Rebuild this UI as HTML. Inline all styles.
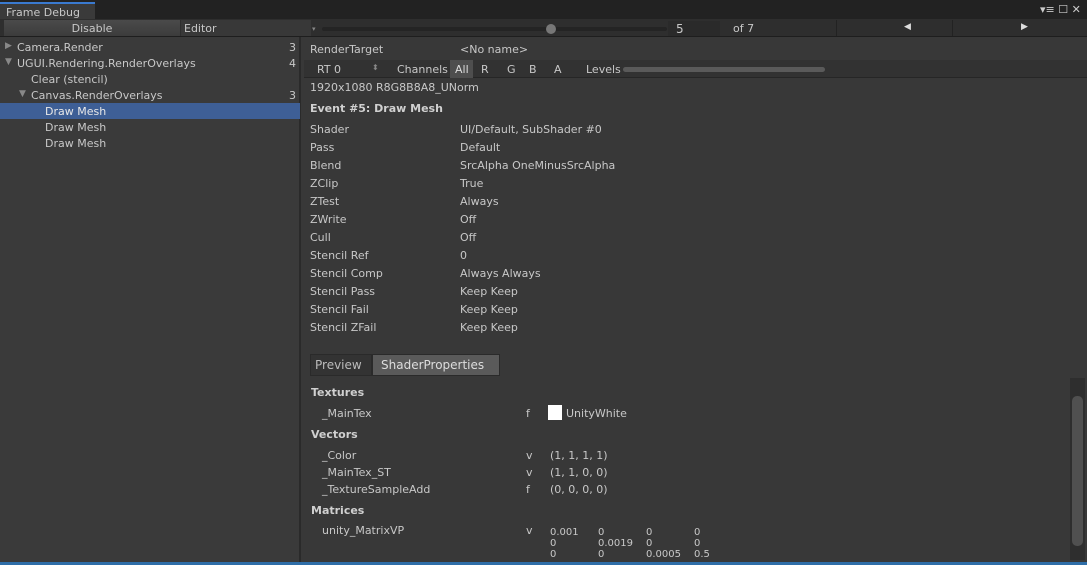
<!DOCTYPE html>
<html><head><style>
*{margin:0;padding:0;box-sizing:border-box}
body{width:1087px;height:565px;overflow:hidden;background:#383838;font-family:"DejaVu Sans","Liberation Sans",sans-serif;font-size:11px;color:#c8c8c8;position:relative}
.a{position:absolute;white-space:nowrap}
.b{font-weight:bold;color:#d0d0d0}
</style></head><body>
<div class="a" style="left:0;top:0;width:1087px;height:19px;background:#222"></div>
<div class="a" style="left:0;top:2px;width:95px;height:2px;background:#3a7ad0"></div>
<div class="a" style="left:0;top:4px;width:95px;height:16px;background:#3a3a3a;padding:2px 0 0 6px">Frame Debug</div>
<div class="a" style="left:1040px;top:3px;color:#ccc;font-size:11px">▾≡ ☐ ✕</div>
<div class="a" style="left:0;top:19px;width:1087px;height:18px;background:#2e2e2e;border-bottom:1px solid #1e1e1e"></div>
<div class="a" style="left:4px;top:20px;width:176px;height:16px;background:linear-gradient(#4a4a4a,#3c3c3c);text-align:center;padding-top:2px">Disable</div>
<div class="a" style="left:181px;top:20px;width:130px;height:16px;background:#383838;padding:2px 0 0 3px">Editor</div>
<div class="a" style="left:312px;top:25px;font-size:7px;color:#888">▾</div>
<div class="a" style="left:322px;top:27px;width:345px;height:4px;background:#242424;border-radius:2px"></div>
<div class="a" style="left:546px;top:24px;width:10px;height:10px;border-radius:5px;background:#777"></div>
<div class="a" style="left:668px;top:21px;width:52px;height:15px;background:#2a2a2a;padding:1px 0 0 8px;font-size:12px">5</div>
<div class="a" style="left:733px;top:22px">of 7</div>
<div class="a" style="left:836px;top:20px;width:1px;height:16px;background:#222"></div>
<div class="a" style="left:952px;top:20px;width:1px;height:16px;background:#222"></div>
<div class="a" style="left:904px;top:22px;font-size:9px;color:#ddd">◀</div>
<div class="a" style="left:1021px;top:22px;font-size:9px;color:#ddd">▶</div>
<div class="a" style="left:0;top:37px;width:301px;height:525px;background:#3a3a3a;border-right:2px solid #2a2a2a"></div>
<div class="a" style="left:5px;top:41px;color:#888;font-size:9px">▶</div>
<div class="a" style="left:17px;top:41px">Camera.Render</div><div class="a" style="left:289px;top:41px">3</div>
<div class="a" style="left:5px;top:57px;color:#888;font-size:9px">▼</div>
<div class="a" style="left:17px;top:57px">UGUI.Rendering.RenderOverlays</div><div class="a" style="left:289px;top:57px">4</div>
<div class="a" style="left:31px;top:73px">Clear (stencil)</div>
<div class="a" style="left:19px;top:89px;color:#888;font-size:9px">▼</div>
<div class="a" style="left:31px;top:89px">Canvas.RenderOverlays</div><div class="a" style="left:289px;top:89px">3</div>
<div class="a" style="left:0;top:103px;width:300px;height:16px;background:#3e5f96"></div>
<div class="a" style="left:45px;top:105px;color:#e8e8e8">Draw Mesh</div>
<div class="a" style="left:45px;top:121px">Draw Mesh</div>
<div class="a" style="left:45px;top:137px">Draw Mesh</div>
<div class="a" style="left:310px;top:43px">RenderTarget</div>
<div class="a" style="left:460px;top:43px">&lt;No name&gt;</div>
<div class="a" style="left:304px;top:60px;width:783px;height:18px;background:#323232;border-bottom:1px solid #262626"></div>
<div class="a" style="left:317px;top:63px">RT 0</div><div class="a" style="left:372px;top:63px;color:#888;font-size:8px">⬍</div>
<div class="a" style="left:397px;top:63px">Channels</div>
<div class="a" style="left:450px;top:60px;width:23px;height:18px;background:#4e4e4e"></div>
<div class="a" style="left:455px;top:63px;color:#ddd">All</div>
<div class="a" style="left:481px;top:63px">R</div><div class="a" style="left:507px;top:63px">G</div><div class="a" style="left:529px;top:63px">B</div><div class="a" style="left:554px;top:63px">A</div>
<div class="a" style="left:586px;top:63px">Levels</div>
<div class="a" style="left:623px;top:67px;width:202px;height:5px;background:#5a5a5a;border-radius:3px"></div>
<div class="a" style="left:310px;top:81px">1920x1080 R8G8B8A8_UNorm</div>
<div class="a b" style="left:310px;top:102px">Event #5: Draw Mesh</div>
<div class="a" style="left:310px;top:121px;line-height:18px">Shader<br>Pass<br>Blend<br>ZClip<br>ZTest<br>ZWrite<br>Cull<br>Stencil Ref<br>Stencil Comp<br>Stencil Pass<br>Stencil Fail<br>Stencil ZFail</div>
<div class="a" style="left:460px;top:121px;line-height:18px">UI/Default, SubShader #0<br>Default<br>SrcAlpha OneMinusSrcAlpha<br>True<br>Always<br>Off<br>Off<br>0<br>Always Always<br>Keep Keep<br>Keep Keep<br>Keep Keep</div>
<div class="a" style="left:310px;top:354px;width:62px;height:22px;background:#333;border:1px solid #2a2a2a;padding:3px 0 0 4px;font-size:12px;color:#bbb">Preview</div>
<div class="a" style="left:372px;top:354px;width:128px;height:22px;background:#5a5a5a;border:1px solid #2a2a2a;padding:3px 0 0 8px;font-size:12px;color:#ddd">ShaderProperties</div>
<div class="a b" style="left:311px;top:386px">Textures</div>
<div class="a" style="left:322px;top:407px">_MainTex</div><div class="a" style="left:526px;top:407px">f</div>
<div class="a" style="left:548px;top:405px;width:14px;height:15px;background:#fff"></div>
<div class="a" style="left:566px;top:407px">UnityWhite</div>
<div class="a b" style="left:311px;top:428px">Vectors</div>
<div class="a" style="left:322px;top:447px;line-height:17px">_Color<br>_MainTex_ST<br>_TextureSampleAdd</div>
<div class="a" style="left:526px;top:447px;line-height:17px">v<br>v<br>f</div>
<div class="a" style="left:550px;top:447px;line-height:17px">(1, 1, 1, 1)<br>(1, 1, 0, 0)<br>(0, 0, 0, 0)</div>
<div class="a b" style="left:311px;top:504px">Matrices</div>
<div class="a" style="left:322px;top:524px">unity_MatrixVP</div><div class="a" style="left:526px;top:524px">v</div>
<div class="a" style="left:550px;top:527px;line-height:11px;font-size:10px">0.001<br>0<br>0</div>
<div class="a" style="left:598px;top:527px;line-height:11px;font-size:10px">0<br>0.0019<br>0</div>
<div class="a" style="left:646px;top:527px;line-height:11px;font-size:10px">0<br>0<br>0.0005</div>
<div class="a" style="left:694px;top:527px;line-height:11px;font-size:10px">0<br>0<br>0.5</div>
<div class="a" style="left:1070px;top:378px;width:15px;height:182px;background:#2e2e2e"></div>
<div class="a" style="left:1072px;top:396px;width:11px;height:150px;background:#505050;border-radius:5px"></div>
<div class="a" style="left:0;top:562px;width:1087px;height:3px;background:#2f6ea8"></div>
</body></html>
